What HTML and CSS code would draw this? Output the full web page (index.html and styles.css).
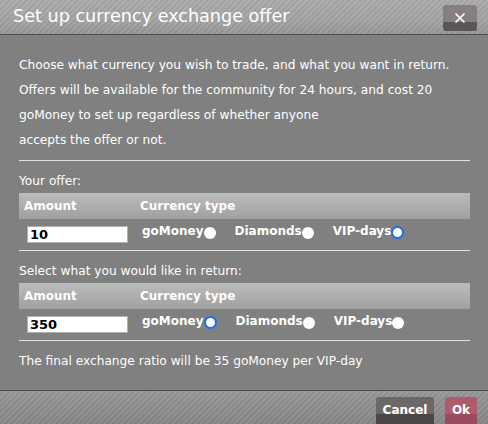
FILE: index.html
```html
<!DOCTYPE html>
<html>
<head>
<meta charset="utf-8">
<link rel="stylesheet" href="styles.css">
</head>
<body>
<div class="dialog">
  <div class="titlebar">
    <h1 class="title">Set up currency exchange offer</h1>
    <button class="close" aria-label="Close">
      <svg width="12" height="12" viewBox="0 0 12 12"><path d="M1.5 1.5 L10.5 10.5 M10.5 1.5 L1.5 10.5" stroke="#fff" stroke-width="1.6" fill="none"/></svg>
    </button>
  </div>
  <div class="content">
    <p class="intro">Choose what currency you wish to trade, and what you want in return. Offers will be available for the community for 24 hours, and cost 20 goMoney to set up regardless of whether anyone<br>accepts the offer or not.</p>
    <div class="rule"></div>
    <div class="label">Your offer:</div>
    <div class="thead"><span class="c-amount">Amount</span><span class="c-type">Currency type</span></div>
    <div class="trow">
      <div class="c-amount"><input class="amount" type="text" value="10"></div>
      <div class="c-type opts">
        <label class="opt">goMoney<input type="radio" name="give"></label>
        <label class="opt">Diamonds<input type="radio" name="give"></label>
        <label class="opt">VIP-days<input type="radio" name="give" checked></label>
      </div>
    </div>
    <div class="rule"></div>
    <div class="label">Select what you would like in return:</div>
    <div class="thead"><span class="c-amount">Amount</span><span class="c-type">Currency type</span></div>
    <div class="trow">
      <div class="c-amount"><input class="amount" type="text" value="350"></div>
      <div class="c-type opts">
        <label class="opt">goMoney<input type="radio" name="get" checked></label>
        <label class="opt">Diamonds<input type="radio" name="get"></label>
        <label class="opt">VIP-days<input type="radio" name="get"></label>
      </div>
    </div>
    <div class="rule"></div>
    <div class="label">The final exchange ratio will be 35 goMoney per VIP-day</div>
  </div>
  <div class="footer">
    <button class="btn cancel">Cancel</button>
    <button class="btn ok">Ok</button>
  </div>
</div>
</body>
</html>
```
FILE: styles.css
```css
html, body {
  margin: 0;
  padding: 0;
  background: #808080;
}
.dialog {
  width: 488px;
  height: 424px;
  display: flex;
  flex-direction: column;
  background: #808080;
  font-family: "DejaVu Sans", Verdana, sans-serif;
  color: #fff;
  overflow: hidden;
}
.titlebar {
  height: 34px;
  border-bottom: 1px solid #4e4e4e;
  display: flex;
  align-items: center;
  justify-content: space-between;
  padding: 0 11px 0 13px;
  background:
    repeating-linear-gradient(135deg, rgba(255,255,255,0.06) 0 2px, rgba(0,0,0,0.04) 2px 4px),
    linear-gradient(#aaaaaa 0, #a3a3a3 60%, #969696 100%);
}
.title {
  margin: 0;
  font-size: 17.6px;
  font-weight: normal;
  color: #fff;
  line-height: 20px;
  padding-bottom: 2px;
}
.close {
  width: 34px;
  height: 26px;
  margin-top: 2px;
  border: 0;
  border-radius: 3px;
  padding: 0;
  display: flex;
  align-items: center;
  justify-content: center;
  background: linear-gradient(#857f7f 0, #857f7f 65%, #5b5555 65%, #5b5555 100%);
}
.content {
  flex: 1;
  padding: 18px 18px 0 19px;
  font-size: 12.2px;
}
.intro {
  margin: 0;
  line-height: 25px;
}
.rule {
  height: 1px;
  background: #e2e2e2;
  margin: 7px 0 9px;
}
.label {
  line-height: 22px;
}
.thead {
  margin-top: 1px;
  height: 26px;
  display: flex;
  align-items: center;
  font-weight: bold;
  font-size: 12px;
  background: linear-gradient(#bbbcbc, #a0a0a0);
}
.thead .c-amount {
  width: 116px;
  padding-left: 5px;
}
.trow {
  height: 24px;
  display: flex;
  align-items: flex-start;
}
.trow .c-amount {
  width: 115px;
  padding-left: 8px;
  padding-top: 7px;
}
.amount {
  display: block;
  width: 101px;
  height: 17px;
  box-sizing: border-box;
  border: 1px solid #b0b0b0;
  padding: 0 2px;
  margin: 0;
  font-family: "DejaVu Sans", Verdana, sans-serif;
  font-size: 13px;
  font-weight: bold;
  color: #000;
  background: #fff;
}
.opts {
  display: flex;
  gap: 19px;
  padding-top: 5px;
  font-weight: bold;
  font-size: 12px;
  line-height: 15px;
}
.opt {
  display: flex;
  align-items: center;
}
.opt input {
  appearance: none;
  -webkit-appearance: none;
  width: 12px;
  height: 12px;
  margin: 2px 0 0 0;
  border-radius: 50%;
  background: #fff;
  box-sizing: border-box;
}
.opt input:checked {
  width: 13px;
  height: 13px;
  border: 2px solid #1a6ff0;
}
.footer {
  height: 33px;
  border-top: 1px solid #4e4e4e;
  display: flex;
  justify-content: flex-end;
  align-items: flex-end;
  gap: 11px;
  padding-right: 11px;
  background:
    repeating-linear-gradient(135deg, rgba(255,255,255,0.06) 0 2px, rgba(0,0,0,0.04) 2px 4px),
    linear-gradient(#979797 0, #8e8e8e 50%, #868686 100%);
}
.btn {
  height: 27px;
  border: 0;
  border-radius: 3px 3px 0 0;
  padding: 0;
  color: #fff;
  font-family: "DejaVu Sans", Verdana, sans-serif;
  font-weight: bold;
  font-size: 12px;
  line-height: 27px;
}
.cancel {
  width: 58px;
  background: linear-gradient(#6d6868 0, #6d6868 62%, #4c4646 62%, #4c4646 100%);
}
.ok {
  width: 32px;
  background: linear-gradient(#b05a6c 0, #b05a6c 62%, #9c4b5c 62%, #9c4b5c 100%);
}
```
